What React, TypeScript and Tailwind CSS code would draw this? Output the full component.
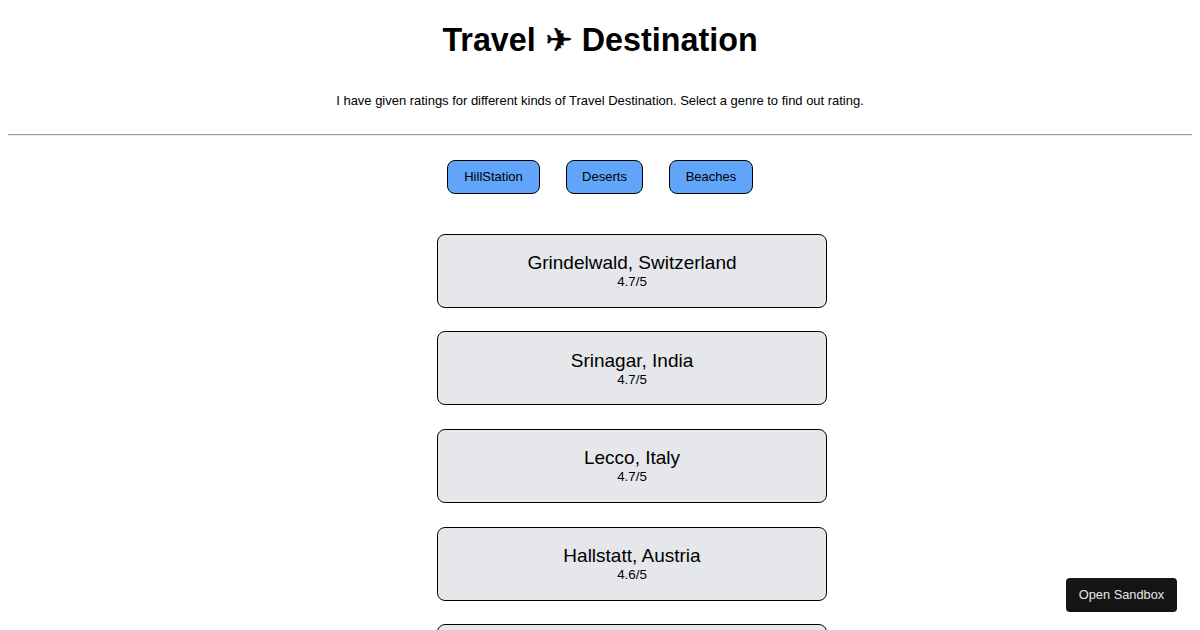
const genres = [
  { label: "HillStation", width: "w-[93px]" },
  { label: "Deserts", width: "w-[77px]" },
  { label: "Beaches", width: "w-[84px]" },
];

const places = [
  { name: "Grindelwald, Switzerland", rating: "4.7/5" },
  { name: "Srinagar, India", rating: "4.7/5" },
  { name: "Lecco, Italy", rating: "4.7/5" },
  { name: "Hallstatt, Austria", rating: "4.6/5" },
];

const cardClass =
  "mx-auto flex h-[74px] w-[390px] shrink-0 flex-col items-center justify-center rounded-lg border border-black bg-[#e5e7eb] pb-[1px]";

export default function App() {
  return (
    <div className="h-[630px] overflow-hidden bg-white px-2 text-black font-['Liberation_Sans','DejaVu_Sans',sans-serif]">
      <h1 className="pt-[22px] text-center text-[32.3px] leading-[37px] font-bold">
        Travel <span className="ml-[1px] [-webkit-text-stroke:0.6px_black]">✈</span> Destination
      </h1>
      <p className="mt-[34px] text-center text-[13px] leading-[15px] tracking-[-0.02px]">
        I have given ratings for different kinds of Travel Destination. Select a genre to find out rating.
      </p>
      <hr className="mt-[26px] h-[2px] border-t border-b border-t-[#9a9a9a] border-b-[#eeeeee]" />

      <div className="mt-[24px] flex justify-center gap-[26px]">
        {genres.map((g) => (
          <button key={g.label} className={`h-[34px] rounded-lg border border-black bg-[#60a5fa] text-[13px] ${g.width}`}>
            {g.label}
          </button>
        ))}
      </div>

      <ul className="mt-[39.8px] flex flex-col gap-[23.6px] pl-16">
        {places.map((p) => (
          <li key={p.name} className={cardClass}>
            <div className="text-[19px] leading-[23px]">{p.name}</div>
            <div className="text-[13.33px] leading-[15px]">{p.rating}</div>
          </li>
        ))}
        {/* next card, only its top edge is on screen */}
        <li className={cardClass} />
      </ul>

      <div className="fixed right-[23px] bottom-[18px] flex h-[34px] w-[111px] items-center justify-center rounded bg-[#151515] text-[12.8px] text-[#e8e8e8]">
        Open Sandbox
      </div>
    </div>
  );
}
